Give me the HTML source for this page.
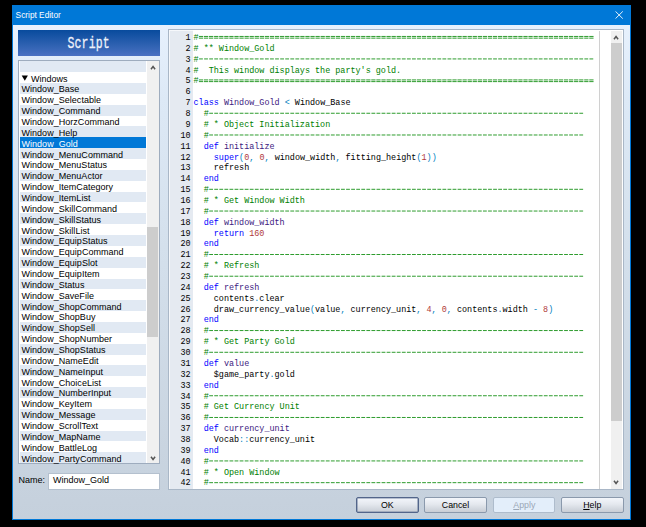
<!DOCTYPE html>
<html><head><meta charset="utf-8">
<style>
*{margin:0;padding:0;box-sizing:border-box}
html,body{width:646px;height:527px;overflow:hidden;background:#000;font-family:"Liberation Sans",sans-serif}
.a{position:absolute}
#win{position:absolute;left:12px;top:5px;width:619px;height:515px;background:#0078d7}
#body{position:absolute;left:13px;top:25px;width:617px;height:494px;background:linear-gradient(#e7f1fd,#dde9f6 15%,#d4e0ec 45%,#c5d0dc)}
#title{position:absolute;left:15.6px;top:8.9px;font-size:8.3px;transform:scaleY(1.12);transform-origin:0 70%;color:#fff;line-height:12px}
#close{position:absolute;left:615px;top:11px;width:8px;height:8px}
#hdr{position:absolute;left:18px;top:29.5px;width:142px;height:26px;background:linear-gradient(#084b9d,#2f62b2 60%,#4a71c3)}
#hdr span{position:absolute;left:49.5px;top:6.5px;font-family:"Liberation Mono",monospace;font-size:11.5px;color:#eef2fa;-webkit-text-stroke:0.2px #eef2fa;letter-spacing:0.15px;line-height:16px;transform:scaleY(1.4);transform-origin:0 60%}
#list{position:absolute;left:18px;top:60px;width:142px;height:404px;border:1px solid #9eacbe;background:#fff;overflow:hidden}
.r{position:absolute;left:20px;width:126px;height:10.865px;font-size:9px;line-height:10.865px;padding-top:1.4px;padding-left:1.5px;letter-spacing:0.03px;color:#000;white-space:nowrap}
.rb{position:absolute;left:20px;width:126px;height:10.865px}
.alt{background:#e1e9f3}
.w{color:#fff}
.tri{position:absolute;left:1.8px;top:1.6px;font-size:7.5px}
.sel{background:#0078d7}
#lsb{position:absolute;left:147px;top:61px;width:12px;height:402px;background:#f0f0f0}
#lthumb{position:absolute;left:147px;top:226.5px;width:11.3px;height:110.3px;background:#cdcdcd}
#code{position:absolute;left:168px;top:29.4px;width:456px;height:460.4px;border:1px solid #a9b7c7;background:#fff;overflow:hidden}
#gut{position:absolute;left:169px;top:30.4px;width:24px;height:458.4px;background:#e5eaf1;border-left:1px solid #f6f8fb;border-top:1px solid #f6f8fb}
.l{position:absolute;left:193.5px;font-family:"Liberation Mono",monospace;font-size:8.45px;line-height:10.865px;height:10.865px;white-space:pre;color:#000}
.ln{position:absolute;left:165px;width:25.6px;text-align:right;font-family:"Liberation Mono",monospace;font-size:8.45px;line-height:10.865px;color:#000}
i{font-style:normal}
.dm{stroke:#2e9c2e;stroke-width:1.0;stroke-dasharray:3.8 1.27}
.de{stroke:#2e9c2e;stroke-width:1;stroke-dasharray:4.3 0.77}
.dmi{display:inline-block;vertical-align:top;margin-top:0}
.deq{display:inline-block;vertical-align:top;margin-top:0}
.c{color:#008000}.k{color:#0000ff}.d{color:#3c2080}.o{color:#0080c0}.n{color:#b03a3a}
#edge{position:absolute;left:599px;top:31px;width:1px;height:457.8px;background:#d0d0d0}
#csb{position:absolute;left:610.8px;top:31px;width:11.5px;height:457.8px;background:#f0f0f0}
#cthumb{position:absolute;left:611px;top:43.4px;width:11.2px;height:377.4px;background:#cdcdcd}
.chev{position:absolute;width:8px;height:5px}
#name{position:absolute;left:18.6px;top:475px;font-size:9px;line-height:10px;color:#000}
#nf{position:absolute;left:48px;top:473px;width:112px;height:16.6px;background:#fff;border:1px solid #b4c0ce}
#nf span{position:absolute;left:4px;top:1.2px;font-size:9px;line-height:10px;color:#000}
.btn{position:absolute;top:497.2px;height:15.7px;border:1px solid #8a99ac;border-radius:2px;background:linear-gradient(#f3f6fb,#e4e8ee 45%,#c8cdd5);font-size:8.8px;line-height:13.5px;padding-top:1.2px;text-align:center;color:#000}
</style></head><body>
<div id="win"></div>
<div id="body"></div>
<div id="title">Script Editor</div>
<svg id="close" viewBox="0 0 8 8"><path d="M0.5 0.4L7.8 7.6M7.8 0.4L0.5 7.6" stroke="#fff" stroke-width="0.9"/></svg>
<div id="hdr"><span>Script</span></div>
<div id="list"></div>
<div class="rb alt" style="top:61.300px"></div>
<div class="rb" style="top:72.160px"></div>
<div class="rb alt" style="top:83.020px"></div>
<div class="rb" style="top:93.880px"></div>
<div class="rb alt" style="top:104.740px"></div>
<div class="rb" style="top:115.600px"></div>
<div class="rb alt" style="top:126.460px"></div>
<div class="rb sel" style="top:137.320px"></div>
<div class="rb alt" style="top:148.180px"></div>
<div class="rb" style="top:159.040px"></div>
<div class="rb alt" style="top:169.900px"></div>
<div class="rb" style="top:180.760px"></div>
<div class="rb alt" style="top:191.620px"></div>
<div class="rb" style="top:202.480px"></div>
<div class="rb alt" style="top:213.340px"></div>
<div class="rb" style="top:224.200px"></div>
<div class="rb alt" style="top:235.060px"></div>
<div class="rb" style="top:245.920px"></div>
<div class="rb alt" style="top:256.780px"></div>
<div class="rb" style="top:267.640px"></div>
<div class="rb alt" style="top:278.500px"></div>
<div class="rb" style="top:289.360px"></div>
<div class="rb alt" style="top:300.220px"></div>
<div class="rb" style="top:311.080px"></div>
<div class="rb alt" style="top:321.940px"></div>
<div class="rb" style="top:332.800px"></div>
<div class="rb alt" style="top:343.660px"></div>
<div class="rb" style="top:354.520px"></div>
<div class="rb alt" style="top:365.380px"></div>
<div class="rb" style="top:376.240px"></div>
<div class="rb alt" style="top:387.100px"></div>
<div class="rb" style="top:397.960px"></div>
<div class="rb alt" style="top:408.820px"></div>
<div class="rb" style="top:419.680px"></div>
<div class="rb alt" style="top:430.540px"></div>
<div class="rb" style="top:441.400px"></div>
<div class="rb alt" style="top:452.260px"></div>
<div class="r" style="top:72.160px"><span style="padding-left:9.4px">Windows</span></div>
<div class="r" style="top:83.020px">Window_Base</div>
<div class="r" style="top:93.880px">Window_Selectable</div>
<div class="r" style="top:104.740px">Window_Command</div>
<div class="r" style="top:115.600px">Window_HorzCommand</div>
<div class="r" style="top:126.460px">Window_Help</div>
<div class="r w" style="top:137.320px">Window_Gold</div>
<div class="r" style="top:148.180px">Window_MenuCommand</div>
<div class="r" style="top:159.040px">Window_MenuStatus</div>
<div class="r" style="top:169.900px">Window_MenuActor</div>
<div class="r" style="top:180.760px">Window_ItemCategory</div>
<div class="r" style="top:191.620px">Window_ItemList</div>
<div class="r" style="top:202.480px">Window_SkillCommand</div>
<div class="r" style="top:213.340px">Window_SkillStatus</div>
<div class="r" style="top:224.200px">Window_SkillList</div>
<div class="r" style="top:235.060px">Window_EquipStatus</div>
<div class="r" style="top:245.920px">Window_EquipCommand</div>
<div class="r" style="top:256.780px">Window_EquipSlot</div>
<div class="r" style="top:267.640px">Window_EquipItem</div>
<div class="r" style="top:278.500px">Window_Status</div>
<div class="r" style="top:289.360px">Window_SaveFile</div>
<div class="r" style="top:300.220px">Window_ShopCommand</div>
<div class="r" style="top:311.080px">Window_ShopBuy</div>
<div class="r" style="top:321.940px">Window_ShopSell</div>
<div class="r" style="top:332.800px">Window_ShopNumber</div>
<div class="r" style="top:343.660px">Window_ShopStatus</div>
<div class="r" style="top:354.520px">Window_NameEdit</div>
<div class="r" style="top:365.380px">Window_NameInput</div>
<div class="r" style="top:376.240px">Window_ChoiceList</div>
<div class="r" style="top:387.100px">Window_NumberInput</div>
<div class="r" style="top:397.960px">Window_KeyItem</div>
<div class="r" style="top:408.820px">Window_Message</div>
<div class="r" style="top:419.680px">Window_ScrollText</div>
<div class="r" style="top:430.540px">Window_MapName</div>
<div class="r" style="top:441.400px">Window_BattleLog</div>
<div class="r" style="top:452.260px">Window_PartyCommand</div>
<svg class="a" style="left:21px;top:75px" width="8" height="7" viewBox="0 0 8 7"><path d="M0.7 0.4H6.9L3.8 5.8Z" fill="#000"/></svg>
<div id="lsb"></div>
<div id="lthumb"></div>
<svg class="chev" style="left:148.6px;top:65.0px" viewBox="0 0 8 5"><path d="M2 4.3L4.05 1.6L6.1 4.3" stroke="#555" stroke-width="1.5" fill="none"/></svg>
<svg class="chev" style="left:148.9px;top:455.6px" viewBox="0 0 8 5"><path d="M2 0.7L4.05 3.4L6.1 0.7" stroke="#555" stroke-width="1.5" fill="none"/></svg>
<div id="code"></div>
<div id="gut"></div>
<div class="ln" style="top:33.000px">1</div>
<div class="ln" style="top:43.865px">2</div>
<div class="ln" style="top:54.730px">3</div>
<div class="ln" style="top:65.595px">4</div>
<div class="ln" style="top:76.460px">5</div>
<div class="ln" style="top:87.325px">6</div>
<div class="ln" style="top:98.190px">7</div>
<div class="ln" style="top:109.055px">8</div>
<div class="ln" style="top:119.920px">9</div>
<div class="ln" style="top:130.785px">10</div>
<div class="ln" style="top:141.650px">11</div>
<div class="ln" style="top:152.515px">12</div>
<div class="ln" style="top:163.380px">13</div>
<div class="ln" style="top:174.245px">14</div>
<div class="ln" style="top:185.110px">15</div>
<div class="ln" style="top:195.975px">16</div>
<div class="ln" style="top:206.840px">17</div>
<div class="ln" style="top:217.705px">18</div>
<div class="ln" style="top:228.570px">19</div>
<div class="ln" style="top:239.435px">20</div>
<div class="ln" style="top:250.300px">21</div>
<div class="ln" style="top:261.165px">22</div>
<div class="ln" style="top:272.030px">23</div>
<div class="ln" style="top:282.895px">24</div>
<div class="ln" style="top:293.760px">25</div>
<div class="ln" style="top:304.625px">26</div>
<div class="ln" style="top:315.490px">27</div>
<div class="ln" style="top:326.355px">28</div>
<div class="ln" style="top:337.220px">29</div>
<div class="ln" style="top:348.085px">30</div>
<div class="ln" style="top:358.950px">31</div>
<div class="ln" style="top:369.815px">32</div>
<div class="ln" style="top:380.680px">33</div>
<div class="ln" style="top:391.545px">34</div>
<div class="ln" style="top:402.410px">35</div>
<div class="ln" style="top:413.275px">36</div>
<div class="ln" style="top:424.140px">37</div>
<div class="ln" style="top:435.005px">38</div>
<div class="ln" style="top:445.870px">39</div>
<div class="ln" style="top:456.735px">40</div>
<div class="ln" style="top:467.600px">41</div>
<div class="ln" style="top:478.465px">42</div>
<div class="l" style="top:33.000px"><i class="c">#</i></div>
<div class="l" style="top:43.865px"><i class="c"># ** Window_Gold</i></div>
<div class="l" style="top:54.730px"><i class="c">#</i></div>
<div class="l" style="top:65.595px"><i class="c">#  This window displays the party&#x27;s gold.</i></div>
<div class="l" style="top:76.460px"><i class="c">#</i></div>
<div class="l" style="top:87.325px"></div>
<div class="l" style="top:98.190px"><i class="k">class</i> <i class="d">Window_Gold</i> <i class="o">&lt;</i> Window_Base</div>
<div class="l" style="top:109.055px">  <i class="c">#</i></div>
<div class="l" style="top:119.920px">  <i class="c"># * Object Initialization</i></div>
<div class="l" style="top:130.785px">  <i class="c">#</i></div>
<div class="l" style="top:141.650px">  <i class="k">def</i> <i class="d">initialize</i></div>
<div class="l" style="top:152.515px">    <i class="k">super</i><i class="o">(</i><i class="n">0</i><i class="o">,</i> <i class="n">0</i><i class="o">,</i> window_width<i class="o">,</i> fitting_height<i class="o">(</i><i class="n">1</i><i class="o">)</i><i class="o">)</i></div>
<div class="l" style="top:163.380px">    refresh</div>
<div class="l" style="top:174.245px">  <i class="k">end</i></div>
<div class="l" style="top:185.110px">  <i class="c">#</i></div>
<div class="l" style="top:195.975px">  <i class="c"># * Get Window Width</i></div>
<div class="l" style="top:206.840px">  <i class="c">#</i></div>
<div class="l" style="top:217.705px">  <i class="k">def</i> <i class="d">window_width</i></div>
<div class="l" style="top:228.570px">    <i class="k">return</i> <i class="n">160</i></div>
<div class="l" style="top:239.435px">  <i class="k">end</i></div>
<div class="l" style="top:250.300px">  <i class="c">#</i></div>
<div class="l" style="top:261.165px">  <i class="c"># * Refresh</i></div>
<div class="l" style="top:272.030px">  <i class="c">#</i></div>
<div class="l" style="top:282.895px">  <i class="k">def</i> <i class="d">refresh</i></div>
<div class="l" style="top:293.760px">    contents<i class="o">.</i>clear</div>
<div class="l" style="top:304.625px">    draw_currency_value<i class="o">(</i>value<i class="o">,</i> currency_unit<i class="o">,</i> <i class="n">4</i><i class="o">,</i> <i class="n">0</i><i class="o">,</i> contents<i class="o">.</i>width <i class="o">-</i> <i class="n">8</i><i class="o">)</i></div>
<div class="l" style="top:315.490px">  <i class="k">end</i></div>
<div class="l" style="top:326.355px">  <i class="c">#</i></div>
<div class="l" style="top:337.220px">  <i class="c"># * Get Party Gold</i></div>
<div class="l" style="top:348.085px">  <i class="c">#</i></div>
<div class="l" style="top:358.950px">  <i class="k">def</i> <i class="d">value</i></div>
<div class="l" style="top:369.815px">    $game_party<i class="o">.</i>gold</div>
<div class="l" style="top:380.680px">  <i class="k">end</i></div>
<div class="l" style="top:391.545px">  <i class="c">#</i></div>
<div class="l" style="top:402.410px">  <i class="c"># Get Currency Unit</i></div>
<div class="l" style="top:413.275px">  <i class="c">#</i></div>
<div class="l" style="top:424.140px">  <i class="k">def</i> <i class="d">currency_unit</i></div>
<div class="l" style="top:435.005px">    Vocab<i class="o">::</i>currency_unit</div>
<div class="l" style="top:445.870px">  <i class="k">end</i></div>
<div class="l" style="top:456.735px">  <i class="c">#</i></div>
<div class="l" style="top:467.600px">  <i class="c"># * Open Window</i></div>
<div class="l" style="top:478.465px">  <i class="c">#</i></div>
<svg class="a" style="left:0;top:0" width="646" height="527" viewBox="0 0 646 527"><line x1="198.87" y1="36.450" x2="594.03" y2="36.450" class="de"/><line x1="198.87" y1="38.150" x2="594.03" y2="38.150" class="de"/><line x1="199.07" y1="58.930" x2="594.03" y2="58.930" class="dm"/><line x1="198.87" y1="79.910" x2="594.03" y2="79.910" class="de"/><line x1="198.87" y1="81.610" x2="594.03" y2="81.610" class="de"/><line x1="209.21" y1="113.255" x2="583.89" y2="113.255" class="dm"/><line x1="209.21" y1="134.985" x2="583.89" y2="134.985" class="dm"/><line x1="209.21" y1="189.310" x2="583.89" y2="189.310" class="dm"/><line x1="209.21" y1="211.040" x2="583.89" y2="211.040" class="dm"/><line x1="209.21" y1="254.500" x2="583.89" y2="254.500" class="dm"/><line x1="209.21" y1="276.230" x2="583.89" y2="276.230" class="dm"/><line x1="209.21" y1="330.555" x2="583.89" y2="330.555" class="dm"/><line x1="209.21" y1="352.285" x2="583.89" y2="352.285" class="dm"/><line x1="209.21" y1="395.745" x2="583.89" y2="395.745" class="dm"/><line x1="209.21" y1="417.475" x2="583.89" y2="417.475" class="dm"/><line x1="209.21" y1="460.935" x2="583.89" y2="460.935" class="dm"/><line x1="209.21" y1="482.665" x2="583.89" y2="482.665" class="dm"/></svg>
<div id="edge"></div>
<div id="csb"></div>
<div id="cthumb"></div>
<svg class="chev" style="left:612.0px;top:34.5px" viewBox="0 0 8 5"><path d="M2 4.3L4.05 1.6L6.1 4.3" stroke="#555" stroke-width="1.5" fill="none"/></svg>
<svg class="chev" style="left:612.0px;top:480.4px" viewBox="0 0 8 5"><path d="M2 0.7L4.05 3.4L6.1 0.7" stroke="#555" stroke-width="1.5" fill="none"/></svg>
<div id="name">Name:</div>
<div id="nf"><span>Window_Gold</span></div>
<div class="btn" style="left:355.9px;width:63px;border-color:#52658a;box-shadow:inset 0 0 0 0.6px #7a8aa6">OK</div>
<div class="btn" style="left:424.1px;width:62.8px">Cancel</div>
<div class="btn" style="left:493.2px;width:62.2px;background:#e3eefa;border-color:#aebccc;color:#9aa6b6"><u>A</u>pply</div>
<div class="btn" style="left:561px;width:62.6px"><u>H</u>elp</div>
</body></html>
